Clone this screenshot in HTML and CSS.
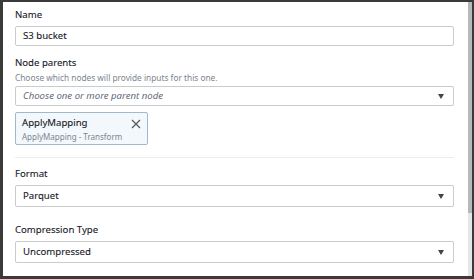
FILE: index.html
```html
<!DOCTYPE html>
<html lang="en">
<head>
    <meta charset="UTF-8">
    <title>Node properties</title>
    <link rel="stylesheet" href="styles.css">
</head>
<body>
    <div class="panel">
        <div class="form-group">
            <label class="field-label">Name</label>
            <div class="input">S3 bucket</div>
        </div>

        <div class="form-group">
            <label class="field-label">Node parents</label>
            <div class="field-desc">Choose which nodes will provide inputs for this one.</div>
            <div class="select select-short placeholder">
                <span>Choose one or more parent node</span>
                <span class="caret"></span>
            </div>
            <div class="token">
                <div class="token-text">
                    <div class="token-title">ApplyMapping</div>
                    <div class="token-sub">ApplyMapping - Transform</div>
                </div>
                <svg class="token-close" width="10" height="10" viewBox="0 0 10 10">
                    <path d="M1 1 L9 9 M9 1 L1 9" stroke="#545b64" stroke-width="1.3" fill="none"/>
                </svg>
            </div>
        </div>

        <hr class="divider">

        <div class="form-group form-group-wide">
            <label class="field-label">Format</label>
            <div class="select">
                <span>Parquet</span>
                <span class="caret"></span>
            </div>
        </div>

        <div class="form-group">
            <label class="field-label">Compression Type</label>
            <div class="select">
                <span>Uncompressed</span>
                <span class="caret"></span>
            </div>
        </div>

        <div class="scrollbar"><div class="thumb"></div></div>
    </div>
</body>
</html>
```

FILE: styles.css
```css
html, body {
    margin: 0;
    height: 100%;
}
body {
    background: #3a3a3a;
    font-family: "Noto Sans", "Open Sans", sans-serif;
    color: #16191f;
    padding: 2px 2px 3px 3px;
    box-sizing: border-box;
}
.panel {
    position: relative;
    background: #fff;
    height: 100%;
    padding: 5px 18px 0 12px;
    box-sizing: border-box;
    overflow: hidden;
}
.form-group {
    margin-bottom: 9px;
}
.form-group-wide {
    margin-bottom: 15px;
}
.field-label {
    display: block;
    font-size: 9.6px;
    line-height: 16px;
    margin-bottom: 3px;
    color: #16191f;
    -webkit-text-stroke: 0.1px #16191f;
}
.field-desc {
    font-size: 8.3px;
    line-height: 14px;
    color: #7d858d;
    margin-top: -3px;
    margin-bottom: 1px;
}
.input, .select {
    border: 1px solid #c9cccc;
    border-radius: 2px;
    height: 20px;
    box-sizing: border-box;
    padding: 0 7px;
    font-size: 9.6px;
    line-height: 18px;
    display: flex;
    align-items: center;
    justify-content: space-between;
    color: #16191f;
    -webkit-text-stroke: 0.1px #16191f;
}
.select {
    height: 22px;
}
.select-short {
    height: 20px;
}
.placeholder {
    font-style: italic;
    color: #5f6b7a;
    -webkit-text-stroke: 0;
}
.caret {
    width: 0;
    height: 0;
    border-left: 3.5px solid transparent;
    border-right: 3.5px solid transparent;
    border-top: 5px solid #444;
    margin-right: 2px;
}
.token {
    margin-top: 6px;
    width: 133px;
    height: 33px;
    box-sizing: border-box;
    border: 1px solid #a3b9cb;
    border-radius: 2px;
    background: #f2f8fc;
    display: flex;
    justify-content: space-between;
    align-items: flex-start;
    padding: 2px 6px 0 6px;
}
.token-title {
    font-size: 9.6px;
    line-height: 16px;
    color: #16191f;
    -webkit-text-stroke: 0.1px #16191f;
}
.token-sub {
    font-size: 8px;
    line-height: 12px;
    color: #7d858d;
}
.token-close {
    margin-top: 4px;
}
.divider {
    border: none;
    border-top: 1px solid #eaeded;
    margin: 12px 0 8px;
}
.scrollbar {
    position: absolute;
    top: 0;
    right: 0;
    width: 4px;
    height: 100%;
    background: #e6e6e6;
}
.thumb {
    height: 211px;
    background: #b8b8b8;
}
```
